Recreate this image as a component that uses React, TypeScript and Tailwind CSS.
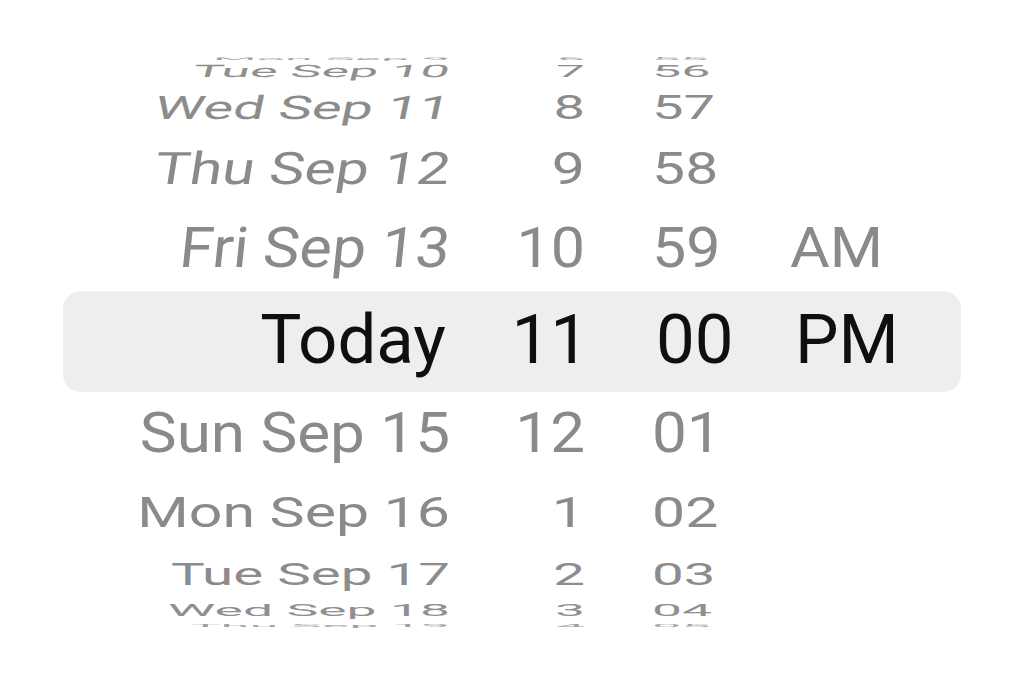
import React from "react";

type Row = {
  d: string;
  h: string;
  m: string;
  a: string;
  row: string;
  dt: string;
  t: string;
};

const rows: Row[] = [
  { d: "Mon Sep 9", h: "6", m: "55", a: "", row: "h-[4px] text-[50px] text-[#a0a0a0]", dt: "[transform:translateY(4px)_skewX(-18deg)_scaleY(0.07)]", t: "[transform:translateY(4px)_scaleY(0.07)]" },
  { d: "Tue Sep 10", h: "7", m: "56", a: "", row: "h-[28px] text-[52px] text-[#8f8f8f]", dt: "[transform:skewX(-15deg)_scaleY(0.33)]", t: "[transform:scaleY(0.33)]" },
  { d: "Wed Sep 11", h: "8", m: "57", a: "", row: "h-[46px] text-[56px] text-[#8c8c8c]", dt: "[transform:skewX(-12deg)_scaleY(0.58)]", t: "[transform:scaleY(0.58)]" },
  { d: "Thu Sep 12", h: "9", m: "58", a: "", row: "h-[74px] text-[59px] text-[#8a8a8a]", dt: "[transform:skewX(-9deg)_scaleY(0.76)]", t: "[transform:scaleY(0.76)]" },
  { d: "Fri Sep 13", h: "10", m: "59", a: "AM", row: "h-[86px] text-[61px] text-[#8a8a8a]", dt: "[transform:skewX(-6deg)_scaleY(0.92)]", t: "[transform:scaleY(0.92)]" },
];

const below: Row[] = [
  { d: "Sun Sep 15", h: "12", m: "01", a: "", row: "h-[82px] text-[62px] text-[#8a8a8a]", dt: "[transform:scaleY(0.91)]", t: "[transform:scaleY(0.91)]" },
  { d: "Mon Sep 16", h: "1", m: "02", a: "", row: "h-[76px] text-[59px] text-[#8a8a8a]", dt: "[transform:scaleY(0.73)]", t: "[transform:scaleY(0.73)]" },
  { d: "Tue Sep 17", h: "2", m: "03", a: "", row: "h-[48px] text-[56.5px] text-[#8c8c8c]", dt: "[transform:scaleY(0.55)]", t: "[transform:scaleY(0.55)]" },
  { d: "Wed Sep 18", h: "3", m: "04", a: "", row: "h-[26px] text-[53.5px] text-[#8f8f8f]", dt: "[transform:scaleY(0.31)]", t: "[transform:scaleY(0.31)]" },
  { d: "Thu Sep 19", h: "4", m: "05", a: "", row: "h-[4px] text-[52px] text-[#a0a0a0]", dt: "[transform:scaleY(0.07)]", t: "[transform:scaleY(0.07)]" },
];

function WheelRow({ r }: { r: Row }) {
  return (
    <div className={`mx-[63px] flex items-center leading-none ${r.row}`}>
      <div className="w-[387px] shrink-0 text-right whitespace-nowrap">
        <span className={`inline-block origin-right ${r.dt}`}>{r.d}</span>
      </div>
      <div className="w-[135px] shrink-0 text-right">
        <span className={`inline-block ${r.t}`}>{r.h}</span>
      </div>
      <div className="w-[205px] shrink-0 pl-[67px]">
        <span className={`inline-block ${r.t}`}>{r.m}</span>
      </div>
      <div className="flex-1">
        <span className={`inline-block ${r.t}`}>{r.a}</span>
      </div>
    </div>
  );
}

export default function App() {
  return (
    <div className="w-[1024px] h-[683px] bg-white overflow-hidden pt-[53px] font-['Roboto',sans-serif]">
      {rows.map((r) => (
        <WheelRow key={r.d} r={r} />
      ))}
      <div className="mx-[63px] h-[101px] pb-[5px] rounded-[18px] bg-[#eeeeee] flex items-center leading-none text-[69px] text-[#0f0f0f]">
        <div className="w-[383px] shrink-0 text-right">Today</div>
        <div className="w-[143px] shrink-0 text-right">11</div>
        <div className="w-[206px] shrink-0 pl-[67px]">00</div>
        <div className="flex-1">PM</div>
      </div>
      {below.map((r) => (
        <WheelRow key={r.d} r={r} />
      ))}
    </div>
  );
}
